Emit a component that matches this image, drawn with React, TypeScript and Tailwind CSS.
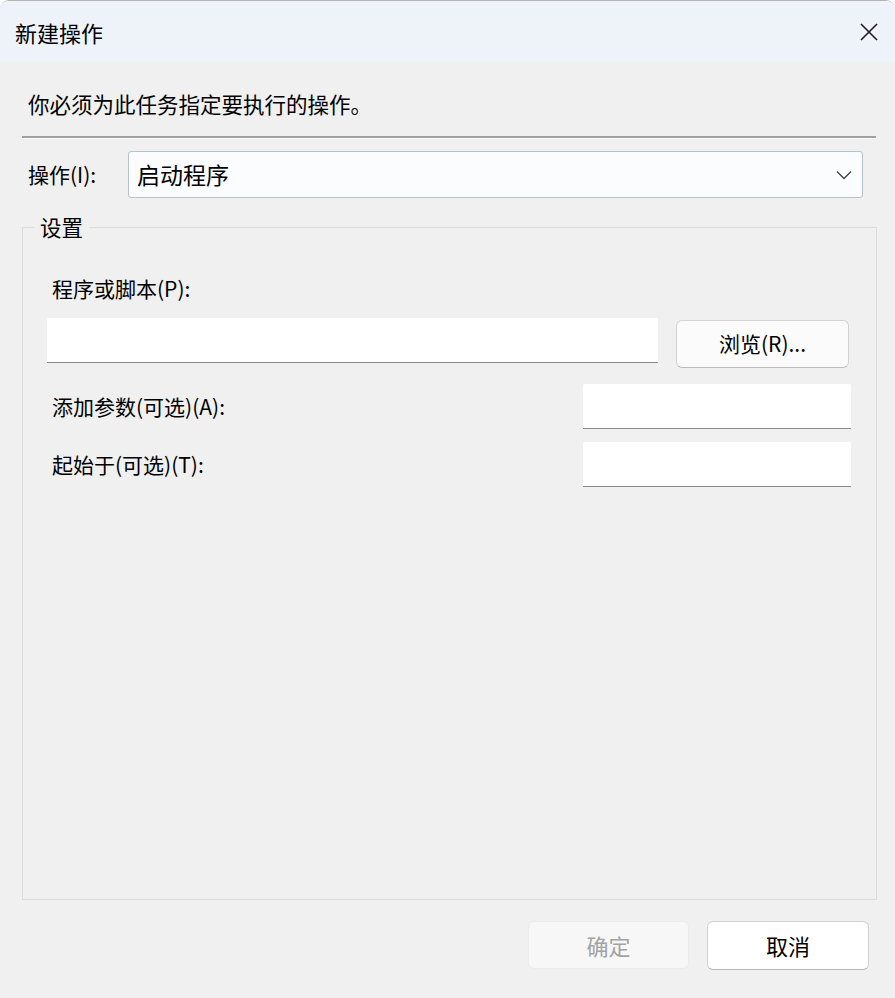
import type { ReactNode } from "react";

const font = { fontFamily: '"Noto Sans CJK SC", "Noto Sans", sans-serif' };

function TextBox({ className }: { className: string }) {
  return <div className={`bg-white border-b border-[#8a8a8a] rounded-t-[2px] ${className}`} />;
}

function Button({ children, disabled }: { children: ReactNode; disabled?: boolean }) {
  return (
    <button
      type="button"
      className={
        disabled
          ? "h-[48px] w-[161px] rounded-[6px] border border-[#ececec] bg-[#f7f7f7] text-[22px] text-[#a3a3a3]"
          : "h-[49px] w-[162px] rounded-[6px] border border-[#d0d0d0] border-b-[#b8b8b8] bg-white text-[22px] text-black"
      }
    >
      {children}
    </button>
  );
}

export default function App() {
  return (
    <div className="w-[895px] h-[998px] bg-white" style={font}>
      <div className="flex h-full flex-col overflow-hidden rounded-t-[9px] border-t border-[#b4b4b4] bg-[#f0f0f0] text-black">
        <header className="flex h-[61px] shrink-0 items-center justify-between bg-[#eef3f9] pl-[15px] pr-[16px]">
          <span className="text-[22px] leading-none">新建操作</span>
          <svg width="20" height="20" viewBox="0 0 20 20" className="text-[#1b1b1b]">
            <path d="M2 2L18 18M18 2L2 18" stroke="currentColor" strokeWidth="1.6" />
          </svg>
        </header>

        <div className="flex flex-1 flex-col pl-[22px] pr-[18px]">
          <p className="mt-[28px] pl-[6px] text-[21.5px] leading-[28px]">你必须为此任务指定要执行的操作。</p>

          <div className="mt-[18px] mr-[1px] border-t-2 border-b border-t-[#a0a0a0] border-b-white" />

          <div className="mt-[12px] flex items-center">
            <span className="w-[106px] pl-[6px] text-[21px]">操作(I):</span>
            <div className="flex h-[47px] w-[735px] items-center justify-between rounded-[3px] border border-[#b6c2c9] bg-[#fbfcfe] pl-[8px] pr-[10px]">
              <span className="text-[23px]">启动程序</span>
              <svg width="16" height="10" viewBox="0 0 16 10" className="text-[#404040]">
                <path d="M1 1.5L8 8.5L15 1.5" fill="none" stroke="currentColor" strokeWidth="1.3" />
              </svg>
            </div>
          </div>

          <fieldset className="mt-[16px] h-[686px] border border-[#dcdcdc] pl-[24px] pr-[25px]">
            <legend className="ml-[-13px] px-[6px] text-[21.5px] leading-[26px]">设置</legend>

            <div className="mt-[34px] pl-[5px] text-[21px] leading-[28px]">程序或脚本(P):</div>
            <div className="mt-[16px] flex items-start justify-between">
              <TextBox className="h-[45px] w-[611px]" />
              <button
                type="button"
                className="mt-[2px] mr-[2px] h-[48px] w-[173px] rounded-[6px] border border-[#d2d2d2] border-b-[#bdbdbd] bg-[#fbfbfb] text-[21px]"
              >
                浏览(R)...
              </button>
            </div>

            <div className="mt-[16px] flex items-center justify-between">
              <span className="pl-[5px] text-[21px]">添加参数(可选)(A):</span>
              <TextBox className="h-[45px] w-[268px]" />
            </div>
            <div className="mt-[13px] flex items-center justify-between">
              <span className="pl-[5px] text-[21px]">起始于(可选)(T):</span>
              <TextBox className="h-[45px] w-[268px]" />
            </div>
          </fieldset>

          <div className="mt-[21px] flex justify-end gap-[18px] pr-[8px]">
            <Button disabled>确定</Button>
            <Button>取消</Button>
          </div>
        </div>
      </div>
    </div>
  );
}
